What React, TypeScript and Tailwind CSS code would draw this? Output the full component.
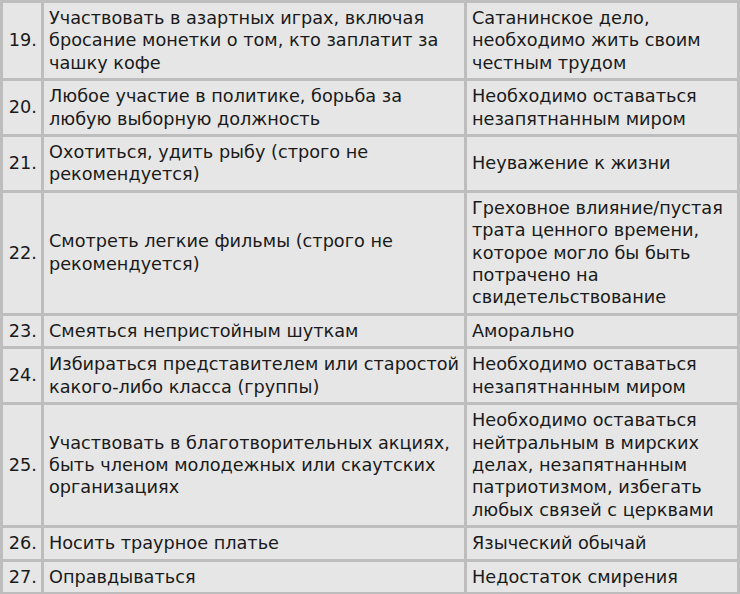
const ROWS = [
  {
    n: "19.",
    what: "Участвовать в азартных играх, включая бросание монетки о том, кто заплатит за чашку кофе",
    why: "Сатанинское дело, необходимо жить своим честным трудом",
  },
  {
    n: "20.",
    what: "Любое участие в политике, борьба за любую выборную должность",
    why: "Необходимо оставаться незапятнанным миром",
  },
  {
    n: "21.",
    what: "Охотиться, удить рыбу (строго не рекомендуется)",
    why: "Неуважение к жизни",
  },
  {
    n: "22.",
    what: "Смотреть легкие фильмы (строго не рекомендуется)",
    why: "Греховное влияние/пустая трата ценного времени, которое могло бы быть потрачено на свидетельствование",
  },
  { n: "23.", what: "Смеяться непристойным шуткам", why: "Аморально" },
  {
    n: "24.",
    what: "Избираться представителем или старостой какого-либо класса (группы)",
    why: "Необходимо оставаться незапятнанным миром",
  },
  {
    n: "25.",
    what: "Участвовать в благотворительных акциях, быть членом молодежных или скаутских организациях",
    why: "Необходимо оставаться нейтральным в мирских делах, незапятнанным патриотизмом, избегать любых связей с церквами",
  },
  { n: "26.", what: "Носить траурное платье", why: "Языческий обычай" },
  { n: "27.", what: "Оправдываться", why: "Недостаток смирения" },
];

export default function App() {
  return (
    <div
      className="w-[740px] h-[594px] bg-[#bdbdbd] p-[3px] text-[17.7px] leading-[22.4px] text-[#1a1a1a] overflow-hidden"
      style={{ fontFamily: '"DejaVu Sans", Verdana, sans-serif' }}
    >
      <div className="grid grid-cols-[38px_420px_1fr] gap-[3px]">
        {ROWS.map((r) => (
          <div key={r.n} className="contents">
            <div className="bg-[#e6e6e6] flex items-center justify-end pr-[4px] py-[4px]">{r.n}</div>
            <div className="bg-[#e6e6e6] flex items-center pl-[5px] pr-[3px] py-[4px]">{r.what}</div>
            <div className="bg-[#e6e6e6] flex items-center pl-[5px] pr-[3px] py-[4px]">{r.why}</div>
          </div>
        ))}
      </div>
    </div>
  );
}
